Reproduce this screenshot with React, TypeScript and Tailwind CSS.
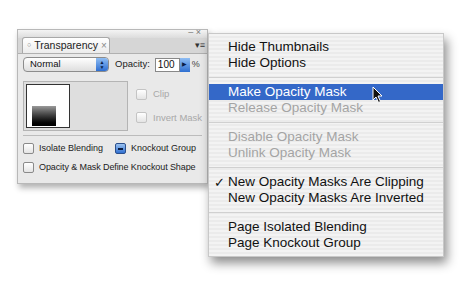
import React from 'react';

const font = { fontFamily: '"Liberation Sans", Arial, sans-serif' };

function Box({ mixed = false, disabled = false }: { mixed?: boolean; disabled?: boolean }) {
  if (mixed) {
    return (
      <span className="flex h-[11px] w-[11px] shrink-0 items-center justify-center rounded-[2px] border border-[#2b4f8c] bg-gradient-to-b from-[#9cc3f0] to-[#2f6fd0]">
        <span className="h-[2px] w-[5px] bg-[#0a1c40]" />
      </span>
    );
  }
  return (
    <span
      className={
        'block h-[11px] w-[11px] shrink-0 rounded-[2px] border bg-gradient-to-b from-white to-[#e4e4e4] ' +
        (disabled ? 'border-[#c4c4c4]' : 'border-[#8a8a8a]')
      }
    />
  );
}

type Item = { label: string; kind?: 'normal' | 'disabled' | 'active'; check?: boolean } | 'sep';

const items: Item[] = [
  { label: 'Hide Thumbnails' },
  { label: 'Hide Options' },
  'sep',
  { label: 'Make Opacity Mask', kind: 'active' },
  { label: 'Release Opacity Mask', kind: 'disabled' },
  'sep',
  { label: 'Disable Opacity Mask', kind: 'disabled' },
  { label: 'Unlink Opacity Mask', kind: 'disabled' },
  'sep',
  { label: 'New Opacity Masks Are Clipping', check: true },
  { label: 'New Opacity Masks Are Inverted' },
  'sep',
  { label: 'Page Isolated Blending' },
  { label: 'Page Knockout Group' },
];

function Cursor() {
  return (
    <svg width="12" height="18" viewBox="0 0 12 18" className="absolute left-[163px] top-[2px]">
      <path d="M1 1 L1 14 L4 11 L6.5 16.5 L8.5 15.5 L6 10 L10 10 Z" fill="#111" stroke="#fff" strokeWidth="1" />
    </svg>
  );
}

function Menu() {
  return (
    <div
      className="absolute left-[208px] top-[33px] w-[236px] border border-[#c8c8c8] bg-[#efefef] py-[5px] shadow-[3px_6px_10px_rgba(0,0,0,0.45)]"
      style={{
        ...font,
        backgroundImage: 'repeating-linear-gradient(to bottom, #f3f3f3 0px, #f3f3f3 2px, #ebebeb 2px, #ebebeb 4px)',
      }}
    >
      {items.map((it, i) =>
        it === 'sep' ? (
          <div key={i} className="my-[6px] h-px bg-[#d0d0d0]" />
        ) : (
          <div
            key={i}
            className={
              'relative flex h-[16px] items-center whitespace-nowrap pl-[19px] text-[13.5px] leading-none ' +
              (it.kind === 'active'
                ? 'bg-[#3468c8] text-white'
                : it.kind === 'disabled'
                ? 'text-[#a4a4a4]'
                : 'text-[#111]')
            }
          >
            {it.check && <span className="absolute left-[5px] text-[13px]">✓</span>}
            {it.label}
            {it.kind === 'active' && <Cursor />}
          </div>
        )
      )}
    </div>
  );
}

function Panel() {
  return (
    <div className="w-[191px] border border-[#b8b8b8] bg-[#e9e9e9] shadow-[2px_4px_6px_rgba(0,0,0,0.3)]" style={font}>
      <div className="relative h-[8px] bg-gradient-to-b from-[#f4f4f4] to-[#dcdcdc]">
        <span className="absolute right-[6px] top-[-2px] text-[9px] leading-none text-[#777]">– ×</span>
      </div>
      <div className="relative flex h-[16px] items-end border-b border-[#b0b0b0] bg-[#d6d6d6] pl-[4px]">
        <div className="flex h-[16px] w-[88px] items-center gap-[3px] whitespace-nowrap rounded-t-[3px] border border-b-0 border-[#a8a8a8] bg-gradient-to-b from-white to-[#ececec] pl-[4px] text-[10.5px] text-[#222]">
          <span className="text-[7px] text-[#777]">○</span>
          <span>Transparency</span>
          <span className="text-[10px] text-[#888]">×</span>
        </div>
        <span className="absolute right-[2px] top-[3px] text-[9px] leading-none text-[#333]">▾≡</span>
      </div>
      <div className="px-[5px] pt-[3px]">
        <div className="flex items-center whitespace-nowrap">
          <div className="flex h-[15px] w-[86px] items-center justify-between rounded-[4px] border border-[#8c8c8c] bg-gradient-to-b from-white to-[#dedede] pl-[6px] text-[9.5px] text-[#111]">
            <span>Normal</span>
            <span className="flex h-[13px] w-[12px] flex-col items-center justify-center rounded-r-[3px] bg-gradient-to-b from-[#8fbdf3] to-[#2e6fd1] text-[5px] leading-[5px] text-[#0b1e44]">
              <span>▲</span>
              <span>▼</span>
            </span>
          </div>
          <span className="ml-[6px] text-[9.5px] text-[#222]">Opacity:</span>
          <div className="ml-[5px] flex h-[14px] w-[25px] items-center border border-[#888] bg-white pl-[2px] text-[10px] text-[#111]">100</div>
          <span className="flex h-[14px] w-[10px] items-center justify-center bg-gradient-to-b from-[#8fbdf3] to-[#2e6fd1] text-[6px] text-[#0b1e44]">▶</span>
          <span className="ml-[2px] text-[9px] text-[#444]">%</span>
        </div>
        <div className="mt-[9px] flex items-center border-b border-[#bcbcbc] pb-[4px]">
          <div className="h-[50px] w-[105px] shrink-0 border border-[#b4b4b4] bg-[#dedede] p-[2px]">
            <div className="flex h-[44px] w-[44px] items-end justify-center border border-[#333] bg-white pb-[1px] pr-[8px]">
              <div className="h-[20px] w-[24px] bg-gradient-to-b from-[#9a9a9a] to-[#000]" />
            </div>
          </div>
          <div className="ml-[8px] flex flex-col gap-[9px] whitespace-nowrap text-[9.5px] text-[#a8a8a8]">
            <div className="flex items-center gap-[6px]">
              <Box disabled />
              <span>Clip</span>
            </div>
            <div className="flex items-center gap-[6px]">
              <Box disabled />
              <span>Invert Mask</span>
            </div>
          </div>
        </div>
        <div className="mt-[6px] flex flex-col gap-[5px] whitespace-nowrap pb-[9px] text-[9px] text-[#222]">
          <div className="flex items-center">
            <Box />
            <span className="ml-[5px]">Isolate Blending</span>
            <span className="ml-[12px]">
              <Box mixed />
            </span>
            <span className="ml-[5px]">Knockout Group</span>
          </div>
          <div className="flex items-center">
            <Box />
            <span className="ml-[5px] tracking-[-0.1px]">Opacity &amp; Mask Define Knockout Shape</span>
          </div>
        </div>
      </div>
    </div>
  );
}

export default function App() {
  return (
    <div className="relative h-[304px] w-[474px] overflow-hidden bg-white pl-[17px] pt-[29px]">
      <Panel />
      <Menu />
    </div>
  );
}
